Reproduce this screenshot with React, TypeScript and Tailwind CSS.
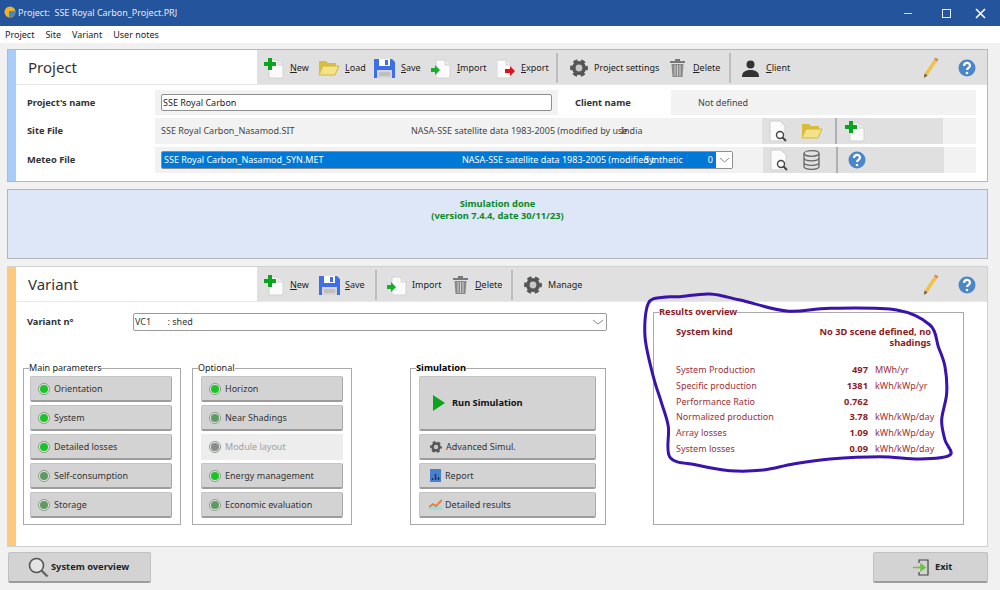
import type { ReactNode } from 'react'

// --- icons ---
function Doc({ children, dx = 0 }: { children?: ReactNode; dx?: number }) {
  return (
    <svg width="22" height="22" viewBox="0 0 22 22" className="shrink-0">
      <g transform={`translate(${dx} 0)`}>
        <path d="M5 3h9l5 5v13H5z" fill="#fbfbfb" stroke="#d2d2d2" strokeWidth="1" />
        <path d="M14 3v5h5" fill="#eee" stroke="#d2d2d2" strokeWidth="1" />
      </g>
      {children}
    </svg>
  )
}
const NewIcon = () => (
  <Doc>
    <path d="M4 1h4v4h4v4H8v4H4V9H0V5h4z" fill="#0aa51c" />
  </Doc>
)
const ImportIcon = () => (
  <Doc>
    <path d="M0 11h4V8l5 5-5 5v-3H0z" fill="#12b12a" />
  </Doc>
)
const ExportIcon = () => (
  <Doc dx={-5}>
    <path d="M8 12h5V9l5 5-5 5v-3H8z" fill="#e0101a" />
  </Doc>
)
const Folder = () => (
  <svg width="22" height="18" viewBox="0 0 22 18" className="shrink-0">
    <path d="M1 2h7l2 2h8v3H5L1 15z" fill="#d8bd3d" />
    <path d="M1 16 5 7h16l-4 9z" fill="#f3e288" stroke="#d2b73a" strokeWidth="1" />
  </svg>
)
const Floppy = () => (
  <svg width="21" height="21" viewBox="0 0 21 21" className="shrink-0">
    <path d="M0 1h18l3 3v16H0z" fill="#3f6fe8" />
    <rect x="5" y="1" width="11" height="7" fill="#fff" />
    <rect x="11" y="2" width="3" height="5" fill="#3f6fe8" />
    <rect x="3" y="12" width="15" height="8" fill="#d5d5d5" />
    <path d="M5 15h11M5 17h11" stroke="#aaa" strokeWidth="1" />
  </svg>
)
const Gear = ({ size = 18 }: { size?: number }) => (
  <svg width={size} height={size} viewBox="0 0 18 18" className="shrink-0">
    <circle cx="9" cy="9" r="5.200" fill="#c8c8c8" stroke="#555" strokeWidth="3.600" />
    <circle cx="9" cy="9" r="7.600" fill="none" stroke="#555" strokeWidth="2.600" strokeDasharray="4.400 3.560" strokeDashoffset="2.200" />
  </svg>
)
const Trash = () => (
  <svg width="17" height="20" viewBox="0 0 17 20" className="shrink-0">
    <path d="M6 1h5v2H6zM1 3h15v2H1z" fill="#777" />
    <path d="M2.500 6h12l-1 13h-10z" fill="#8a8a8a" />
    <path d="M6 7v11M8.500 7v11M11 7v11" stroke="#cfcfcf" strokeWidth="1" />
  </svg>
)
const Person = () => (
  <svg width="17" height="17" viewBox="0 0 17 17" className="shrink-0">
    <circle cx="8.500" cy="4.500" r="4" fill="#333" />
    <path d="M0 17c0-5 3-7 8.500-7S17 12 17 17z" fill="#333" />
  </svg>
)
const Pencil = () => (
  <svg width="16" height="22" viewBox="0 0 16 22" className="shrink-0">
    <path d="M11 2.500 14 4.500 4.500 18.500 1.500 16.500z" fill="#f0c24a" />
    <path d="M11 2.500 12.500 0.500 15.500 2.500 14 4.500z" fill="#e0805a" />
    <path d="M1.500 16.500 4.500 18.500 1 21z" fill="#6b5a3a" />
  </svg>
)
const Help = () => (
  <svg width="18" height="18" viewBox="0 0 18 18" className="shrink-0">
    <circle cx="9" cy="9" r="8.500" fill="#4a86c8" />
    <path d="M6 7c0-4 6-4 6-.5 0 2.300-3 2.300-3 4.500" fill="none" stroke="#fff" strokeWidth="2.200" />
    <circle cx="9" cy="14" r="1.300" fill="#fff" />
  </svg>
)
const DocSearch = () => (
  <svg width="20" height="22" viewBox="0 0 20 22" className="shrink-0">
    <path d="M1 1h10l5 5v15H1z" fill="#fbfbfb" stroke="#cfcfcf" />
    <circle cx="11" cy="15" r="3.500" fill="none" stroke="#444" strokeWidth="1.400" />
    <path d="M13.500 17.500 17 21" stroke="#444" strokeWidth="2" />
  </svg>
)
const Database = () => (
  <svg width="17" height="20" viewBox="0 0 17 20" className="shrink-0">
    <g fill="none" stroke="#666" strokeWidth="1.300">
      <ellipse cx="8.500" cy="3.500" rx="7.500" ry="2.800" />
      <path d="M1 3.500v13c0 3.700 15 3.700 15 0v-13M1 8c0 3.700 15 3.700 15 0M1 12.500c0 3.700 15 3.700 15 0" />
    </g>
  </svg>
)
const Led = ({ state }: { state: 'on' | 'dim' | 'off' }) => {
  const dot = state === 'on' ? 'bg-[#19c424]' : state === 'dim' ? 'bg-[#5f9a64]' : 'bg-[#8b8b8b]'
  return (
    <span className="w-[12px] h-[12px] rounded-full border border-[#8a9a8a] bg-[#e8e8e8] flex items-center justify-center shrink-0">
      <span className={`w-[8px] h-[8px] rounded-full ${dot}`} />
    </span>
  )
}

// --- toolbar ---
function Tool({ icon, label, u, className }: { icon: ReactNode; label: string; u?: boolean; className: string }) {
  return (
    <div className={`flex items-center shrink-0 ${className}`}>
      {icon}
      <span className="text-[9px] text-[#222] whitespace-nowrap">
        {u === false ? label : (
          <>
            <span className="underline">{label[0]}</span>
            {label.slice(1)}
          </>
        )}
      </span>
    </div>
  )
}
const Sep = ({ className = '' }: { className?: string }) => <div className={`w-[2px] h-[30px] bg-[#bdbdbd] shrink-0 ${className}`} />

function PanelHead({ title, children }: { title: string; children: ReactNode }) {
  return (
    <div className="flex h-[35px] border-b border-[#e8e8e8]">
      <div className="w-[241px] pl-[12px] flex items-center text-[15px] text-[#333]">{title}</div>
      <div className="flex-1 bg-[#e0e0e0] flex items-center pl-[7px] pt-[2px]">
        {children}
        <div className="ml-auto flex items-center gap-[19px] pr-[11px]">
          <Pencil />
          <Help />
        </div>
      </div>
    </div>
  )
}

function ParamBtn({ label, led, disabled }: { label: string; led: 'on' | 'dim' | 'off'; disabled?: boolean }) {
  return (
    <div
      className={
        disabled
          ? 'h-[26px] bg-[#ededed] flex items-center gap-[4px] pl-[8px] text-[9px] text-[#a0a0a0]'
          : 'h-[26px] bg-[#d3d3d3] rounded-[2px] border border-[#c4c4c4] border-b-2 border-b-[#9c9c9c] border-r-[#a8a8a8] flex items-center gap-[4px] pl-[7px] text-[9px] text-[#333]'
      }
    >
      <Led state={led} />
      {label}
    </div>
  )
}

function Group({ title, bold, className, children }: { title: string; bold?: boolean; className: string; children: ReactNode }) {
  return (
    <div className={`relative border border-[#a9a9a9] shrink-0 ${className}`}>
      <span className={`absolute -top-[7px] left-[5px] bg-white leading-[12px] ${bold ? 'font-bold text-[9.3px]' : 'text-[9px] text-[#222]'}`}>{title}</span>
      {children}
    </div>
  )
}

const simBtn = 'bg-[#d3d3d3] rounded-[2px] border border-[#c4c4c4] border-b-2 border-b-[#9c9c9c] border-r-[#a8a8a8] flex items-center text-[9px] text-[#333]'
const fieldLabel = 'pl-[11px] font-bold text-[#333] text-[9.3px]'

const results: [string, string, string][] = [
  ['System Production', '497', 'MWh/yr'],
  ['Specific production', '1381', 'kWh/kWp/yr'],
  ['Performance Ratio', '0.762', ''],
  ['Normalized production', '3.78', 'kWh/kWp/day'],
  ['Array losses', '1.09', 'kWh/kWp/day'],
  ['System losses', '0.09', 'kWh/kWp/day'],
]

// hand drawn marker loop, points read off the reference at 3x
const loop = [
  [150, 110], [240, 102], [330, 120], [470, 153], [600, 145], [800, 150], [900, 195], [925, 260], [945, 320], [950, 400],
  [935, 480], [945, 540], [960, 585], [870, 597], [750, 590], [600, 597], [490, 612], [400, 630], [300, 632], [200, 615],
  [120, 592], [115, 500], [95, 430], [70, 350], [45, 230], [55, 130], [100, 112],
]
function loopPath() {
  const n = loop.length
  let d = `M${loop[0][0]} ${loop[0][1]}`
  for (let i = 0; i < n; i++) {
    const [p0, p1, p2, p3] = [loop[(i + n - 1) % n], loop[i], loop[(i + 1) % n], loop[(i + 2) % n]]
    d += `C${p1[0] + (p2[0] - p0[0]) / 6} ${p1[1] + (p2[1] - p0[1]) / 6} ${p2[0] - (p3[0] - p1[0]) / 6} ${p2[1] - (p3[1] - p1[1]) / 6} ${p2[0]} ${p2[1]}`
  }
  return d
}

export default function App() {
  return (
    <div className="relative w-[1000px] h-[590px] overflow-hidden bg-[#f1f1f1] flex flex-col [font-family:'Noto_Sans',sans-serif]">
      {/* Title bar */}
      <div className="h-[26px] bg-[#24549b] flex items-center text-white shrink-0">
        <svg width="12" height="12" viewBox="0 0 12 12" className="ml-[4px] mr-[2px] -mt-[2px]">
          <circle cx="6" cy="6" r="5.500" fill="#f0b420" />
          <path d="M5 5h6.500v1A5.500 5.500 0 0 1 5 11z" fill="#3f86d6" />
        </svg>
        <span className="text-[9px] text-[#e4eaf4] whitespace-pre">Project:  SSE Royal Carbon_Project.PRJ</span>
        <div className="ml-auto flex items-center">
          <span className="w-[8px] h-[1px] bg-[#d8e0ee]" />
          <span className="ml-[30px] w-[9px] h-[9px] border border-[#e8ecf4]" />
          <svg width="11" height="11" viewBox="0 0 11 11" className="ml-[24px] mr-[14px]">
            <path d="M1 1l9 9M10 1l-9 9" stroke="#fff" strokeWidth="1.600" />
          </svg>
        </div>
      </div>
      {/* Menu */}
      <div className="h-[17px] bg-white flex items-center gap-[11px] pl-[5px] pt-[1px] text-[9px] text-[#222] shrink-0">
        <span>Project</span>
        <span>Site</span>
        <span>Variant</span>
        <span>User notes</span>
      </div>

      <div className="flex-1 flex flex-col pl-[7px] pr-[12px] pt-[6px]">
        {/* Project panel */}
        <div className="h-[133px] flex border border-[#b8b8b8] bg-white shrink-0">
          <div className="w-[8px] bg-[#a9cdfb] shrink-0" />
          <div className="flex-1 min-w-0">
            <PanelHead title="Project">
              <Tool icon={<NewIcon />} label="New" className="w-[54px] gap-[4px]" />
              <Tool icon={<Folder />} label="Load" className="w-[56px] gap-[5px]" />
              <Tool icon={<Floppy />} label="Save" className="w-[57px] gap-[6px]" />
              <Tool icon={<ImportIcon />} label="Import" className="w-[66px] gap-[4px]" />
              <Tool icon={<ExportIcon />} label="Export" className="w-[59px] gap-[2px]" />
              <Sep />
              <Tool icon={<Gear />} label="Project settings" u={false} className="ml-[12px] w-[99px] gap-[6px]" />
              <Tool icon={<Trash />} label="Delete" className="w-[60px] gap-[7px]" />
              <Sep />
              <Tool icon={<Person />} label="Client" className="ml-[11px] gap-[7px]" />
            </PanelHead>
            <div className="flex flex-col gap-[3px] pt-[5px] text-[9px]">
              <div className="flex h-[25px] items-center">
                <span className={`w-[139px] ${fieldLabel}`}>Project's name</span>
                <div className="w-[403px] h-full bg-[#f2f2f2] flex items-center pl-[6px]">
                  <div className="w-[391px] h-[17px] bg-white border border-[#8f8f8f] rounded-[2px] flex items-center pl-[1px] text-[#222]">SSE Royal Carbon</div>
                </div>
                <span className={`w-[113px] ${fieldLabel} !pl-[17px]`}>Client name</span>
                <div className="w-[305px] h-full bg-[#f2f2f2] flex items-center pl-[27px] text-[#444]">Not defined</div>
              </div>
              <div className="flex h-[26px] items-center">
                <span className={`w-[139px] ${fieldLabel}`}>Site File</span>
                <div className="w-[607px] h-full bg-[#f2f2f2] flex items-center pl-[6px] text-[#444] whitespace-nowrap">
                  <span className="w-[250px] shrink-0">SSE Royal Carbon_Nasamod.SIT</span>
                  <span className="w-[210px] shrink-0">NASA-SSE satellite data 1983-2005 (modified by use</span>
                  <span>India</span>
                </div>
                <div className="w-[181px] h-full bg-[#e0e0e0] flex items-center pl-[7px]">
                  <DocSearch />
                  <span className="ml-[12px]"><Folder /></span>
                  <span className="ml-[12px] w-[2px] h-full bg-[#b0b0b0]" />
                  <span className="ml-[8px]"><NewIcon /></span>
                </div>
                <div className="w-[33px] h-full bg-[#f2f2f2]" />
              </div>
              <div className="flex h-[26px] items-center">
                <span className={`w-[139px] ${fieldLabel}`}>Meteo File</span>
                <div className="w-[608px] h-full bg-[#f2f2f2] flex items-center pl-[6px]">
                  <div className="w-[572px] h-[18px] bg-[#0078d7] border border-[#8f8f8f] rounded-[2px] flex items-center text-white whitespace-nowrap">
                    <span className="w-[300px] pl-[2px] shrink-0">SSE Royal Carbon_Nasamod_SYN.MET</span>
                    <span className="w-[182px] shrink-0">NASA-SSE satellite data 1983-2005 (modified t</span>
                    <span className="shrink-0">Synthetic</span>
                    <span className="ml-auto pr-[3px]">0</span>
                    <div className="w-[16px] h-full bg-white flex items-center justify-center shrink-0">
                      <svg width="11" height="6" viewBox="0 0 11 6"><path d="M1 1l4.500 4L10 1" fill="none" stroke="#888" /></svg>
                    </div>
                  </div>
                </div>
                <div className="w-[181px] h-full bg-[#e0e0e0] flex items-center pl-[7px]">
                  <DocSearch />
                  <span className="ml-[13px]"><Database /></span>
                  <span className="ml-[16px] w-[2px] h-full bg-[#b0b0b0]" />
                  <span className="ml-[10px]"><Help /></span>
                </div>
                <div className="w-[32px] h-full bg-[#f2f2f2]" />
              </div>
            </div>
          </div>
        </div>

        {/* Status */}
        <div className="mt-[7px] h-[70px] bg-[#dde7f7] border border-[#b5b5b5] shrink-0 flex flex-col items-center pt-[8px] text-[9.3px] leading-[12px] font-bold text-[#0b8a1e]">
          <span>Simulation done</span>
          <span>(version 7.4.4, date 30/11/23)</span>
        </div>

        {/* Variant panel */}
        <div className="mt-[7px] h-[281px] flex border border-[#d0d0d0] bg-white shrink-0">
          <div className="w-[8px] bg-[#fdc97f] shrink-0" />
          <div className="flex-1 min-w-0">
            <PanelHead title="Variant">
              <Tool icon={<NewIcon />} label="New" className="w-[55px] gap-[4px]" />
              <Tool icon={<Floppy />} label="Save" className="w-[56px] gap-[5px]" />
              <Sep />
              <Tool icon={<ImportIcon />} label="Import" u={false} className="ml-[10px] w-[65px] gap-[3px]" />
              <Tool icon={<Trash />} label="Delete" className="w-[59px] gap-[6px]" />
              <Sep />
              <Tool icon={<Gear />} label="Manage" u={false} className="ml-[11px] gap-[6px]" />
            </PanelHead>
            <div className="flex items-center h-[18px] mt-[11px] text-[9px]">
              <span className={`w-[117px] ${fieldLabel}`}>Variant n°</span>
              <div className="w-[474px] h-[18px] bg-white border border-[#9a9a9a] rounded-[2px] flex items-center pl-[1px] text-[#333] whitespace-pre">
                VC1{'       '}: shed
                <svg width="12" height="6" viewBox="0 0 12 6" className="ml-auto mr-[2px]"><path d="M1 1l5 4 5-4" fill="none" stroke="#888" /></svg>
              </div>
            </div>
            <div className="flex mt-[37px] pl-[7px]">
              <Group title="Main parameters" className="w-[158px] h-[157px]">
                <div className="flex flex-col gap-[3px] pl-[6px] pr-[8px] pt-[7px]">
                  <ParamBtn label="Orientation" led="on" />
                  <ParamBtn label="System" led="on" />
                  <ParamBtn label="Detailed losses" led="on" />
                  <ParamBtn label="Self-consumption" led="dim" />
                  <ParamBtn label="Storage" led="dim" />
                </div>
              </Group>
              <Group title="Optional" className="w-[160px] h-[157px] ml-[11px]">
                <div className="flex flex-col gap-[3px] pl-[8px] pr-[8px] pt-[7px]">
                  <ParamBtn label="Horizon" led="on" />
                  <ParamBtn label="Near Shadings" led="dim" />
                  <ParamBtn label="Module layout" led="off" disabled />
                  <ParamBtn label="Energy management" led="on" />
                  <ParamBtn label="Economic evaluation" led="dim" />
                </div>
              </Group>
              <Group title="Simulation" bold className="w-[196px] h-[157px] ml-[58px]">
                <div className="flex flex-col gap-[3px] pl-[8px] pr-[9px] pt-[7px]">
                  <div className={`${simBtn} h-[55px] pl-[13px] gap-[7px]`}>
                    <svg width="12" height="16" viewBox="0 0 12 16"><path d="M0 0l12 8-12 8z" fill="#0aa51c" /></svg>
                    <span className="font-bold text-[9.3px] text-[#111]">Run Simulation</span>
                  </div>
                  <div className={`${simBtn} h-[26px] pl-[10px] gap-[4px]`}>
                    <Gear size={12} />
                    Advanced Simul.
                  </div>
                  <div className={`${simBtn} h-[26px] pl-[10px] gap-[4px]`}>
                    <svg width="11" height="13" viewBox="0 0 11 13" className="shrink-0">
                      <rect width="11" height="13" fill="#4a7fcb" />
                      <path d="M2.500 11V9M5.500 11V5M8.500 11V8" stroke="#17385f" strokeWidth="1.500" />
                    </svg>
                    Report
                  </div>
                  <div className={`${simBtn} h-[26px] pl-[9px] gap-[3px]`}>
                    <svg width="13" height="11" viewBox="0 0 13 11" className="shrink-0">
                      <rect y="7" width="13" height="4" fill="#9fdcd8" />
                      <path d="M0 8 4 5 7 7 13 1" fill="none" stroke="#ea7a3c" strokeWidth="1.800" />
                    </svg>
                    Detailed results
                  </div>
                </div>
              </Group>
              <Group title="Results overview" bold className="w-[311px] h-[213px] ml-[47px] -mt-[56px] text-[#8e1a1f]">
                <div className="pl-[22px] pt-[13px]">
                  <div className="flex font-bold text-[9.3px] leading-[11px]">
                    <span className="w-[120px]">System kind</span>
                    <span className="w-[135px] text-right">No 3D scene defined, no shadings</span>
                  </div>
                  <div className="mt-[16px] flex flex-col gap-[4px] text-[9px] leading-[11.8px] text-[#a03035]">
                    {results.map(([name, value, unit]) => (
                      <div key={name} className="flex">
                        <span className="w-[120px] whitespace-nowrap">{name}</span>
                        <span className="w-[72px] text-right font-bold text-[9.3px] text-[#8e1a1f]">{value}</span>
                        <span className="ml-[7px] whitespace-nowrap">{unit}</span>
                      </div>
                    ))}
                  </div>
                </div>
              </Group>
            </div>
          </div>
        </div>

        {/* Bottom buttons */}
        <div className="flex justify-between mt-[5px] pl-[1px]">
          <div className="w-[143px] h-[31px] bg-[#d3d3d3] rounded-[2px] border border-[#c0c0c0] border-b-2 border-b-[#9c9c9c] flex items-center pl-[19px] gap-[2px]">
            <svg width="21" height="21" viewBox="0 0 21 21" className="shrink-0">
              <circle cx="8.500" cy="8.500" r="7" fill="#e4e4e4" stroke="#555" strokeWidth="1.600" />
              <path d="M13.500 13.500 19.500 19.500" stroke="#666" strokeWidth="2.400" />
            </svg>
            <span className="text-[9.3px] font-bold text-[#222]">System overview</span>
          </div>
          <div className="w-[115px] h-[31px] bg-[#d3d3d3] rounded-[2px] border border-[#c0c0c0] border-b-2 border-b-[#9c9c9c] flex items-center pl-[39px] gap-[4px]">
            <svg width="18" height="17" viewBox="0 0 18 17" className="shrink-0">
              <path d="M6 4V1h9v15H6v-3" fill="none" stroke="#444" strokeWidth="1.200" />
              <path d="M0 8.500h8M8 5.500l4 3-4 3z" stroke="#6fbf45" strokeWidth="1.600" fill="#6fbf45" />
            </svg>
            <span className="text-[9.3px] font-bold text-[#222]">Exit</span>
          </div>
        </div>
      </div>

      {/* marker annotation drawn over the screenshot */}
      <svg width="370" height="330" viewBox="0 0 1110 990" className="absolute left-[630px] top-[260px] pointer-events-none">
        <path d={loopPath()} fill="none" stroke="#3a12ad" strokeWidth="9" strokeLinejoin="round" />
      </svg>
    </div>
  )
}
